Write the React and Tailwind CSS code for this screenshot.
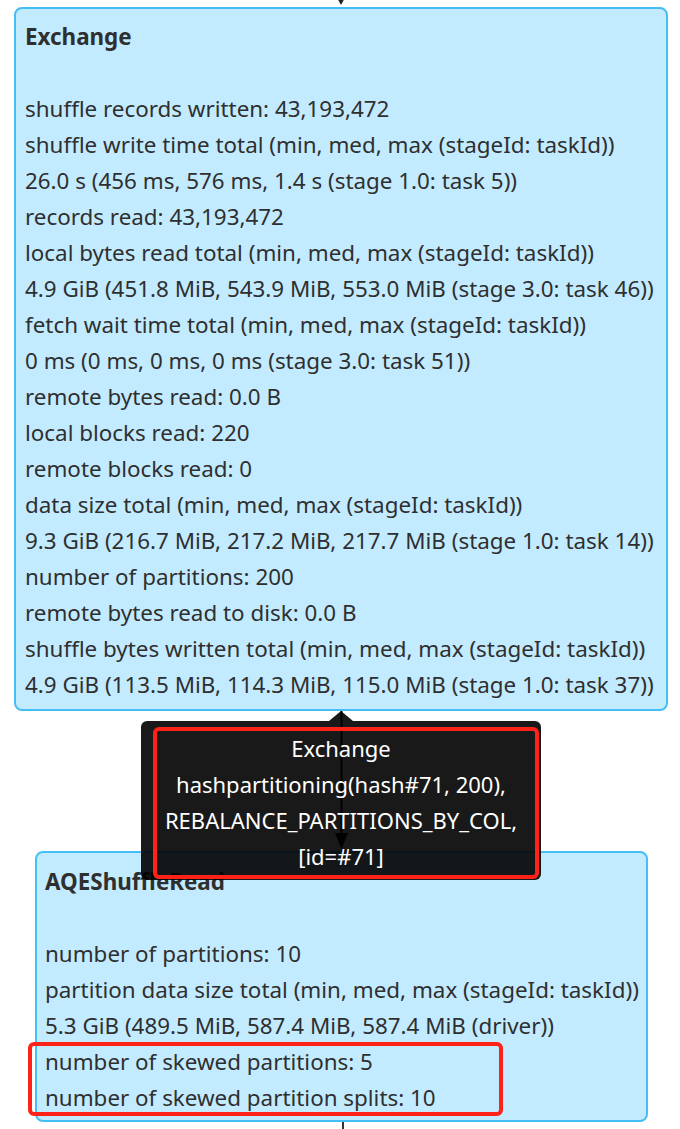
import React from 'react';

const exchangeMetrics = [
    'shuffle records written: 43,193,472',
    'shuffle write time total (min, med, max (stageId: taskId))',
    '26.0 s (456 ms, 576 ms, 1.4 s (stage 1.0: task 5))',
    'records read: 43,193,472',
    'local bytes read total (min, med, max (stageId: taskId))',
    '4.9 GiB (451.8 MiB, 543.9 MiB, 553.0 MiB (stage 3.0: task 46))',
    'fetch wait time total (min, med, max (stageId: taskId))',
    '0 ms (0 ms, 0 ms, 0 ms (stage 3.0: task 51))',
    'remote bytes read: 0.0 B',
    'local blocks read: 220',
    'remote blocks read: 0',
    'data size total (min, med, max (stageId: taskId))',
    '9.3 GiB (216.7 MiB, 217.2 MiB, 217.7 MiB (stage 1.0: task 14))',
    'number of partitions: 200',
    'remote bytes read to disk: 0.0 B',
    'shuffle bytes written total (min, med, max (stageId: taskId))',
    '4.9 GiB (113.5 MiB, 114.3 MiB, 115.0 MiB (stage 1.0: task 37))',
];

const readMetrics = [
    'number of partitions: 10',
    'partition data size total (min, med, max (stageId: taskId))',
    '5.3 GiB (489.5 MiB, 587.4 MiB, 587.4 MiB (driver))',
    'number of skewed partitions: 5',
    'number of skewed partition splits: 10',
];

const font = { fontFamily: '"Noto Sans", "Open Sans", sans-serif' };

const NodeBox = ({ title, metrics, className, children }) => (
    <div className={`relative rounded-lg border-2 border-[#45bdf5] bg-[#c3ebff] text-[#2f2f2f] text-[22.4px] leading-[36px] whitespace-nowrap ${className}`}>
        <div className="font-bold">{title}</div>
        <div className="h-[36px]" />
        {metrics.map((m) => (
            <div key={m}>{m}</div>
        ))}
        {children}
    </div>
);

const App = () => {
    return (
        <div className="relative w-[680px] h-[1129px] bg-white overflow-hidden" style={font}>
            {/* incoming edge */}
            <div className="h-[7px] relative">
                <svg className="absolute left-[334px] -top-[6px]" width="14" height="13" viewBox="0 0 14 13">
                    <path d="M1 0 L7 11 L13 0 Z" fill="#222" />
                </svg>
            </div>

            <NodeBox title="Exchange" metrics={exchangeMetrics} className="ml-[14px] w-[654px] h-[704px] pt-[10px] pl-[9px]" />

            {/* edge between nodes */}
            <div className="relative h-[140px]">
                <svg className="absolute left-[330px] top-0" width="24" height="140" viewBox="0 0 24 140">
                    <line x1="11.5" y1="0" x2="11.5" y2="124" stroke="#111" strokeWidth="2" />
                    <path d="M5 122 L11.5 138 L18 122 Z" fill="#111" />
                </svg>
            </div>

            <NodeBox title="AQEShuffleRead" metrics={readMetrics} className="ml-[35px] w-[613px] h-[271px] pt-[11px] pl-[8px]">
                <div className="absolute -left-[9px] top-[189px] w-[475px] h-[74px] rounded-md border-4 border-[#ff2219]" />
            </NodeBox>

            {/* outgoing edge */}
            <div className="ml-[342px] w-[2px] h-[7px] bg-[#333]" />

            {/* tooltip */}
            <div className="absolute left-[141px] top-[721px] w-[400px] h-[159px] rounded-md bg-black/90 text-white text-[22px] leading-[36px] text-center pt-[9px]">
                <svg className="absolute left-[188px] -top-[10px]" width="24" height="10" viewBox="0 0 24 10">
                    <path d="M0 10 L12 0 L24 10 Z" fill="rgba(0,0,0,0.9)" />
                </svg>
                <div>Exchange</div>
                <div>hashpartitioning(hash#71, 200),</div>
                <div>REBALANCE_PARTITIONS_BY_COL,</div>
                <div>[id=#71]</div>
                <div className="absolute left-[12px] top-[6px] w-[386px] h-[152px] rounded-md border-4 border-[#ff2219]" />
            </div>
        </div>
    );
};

export default App;
